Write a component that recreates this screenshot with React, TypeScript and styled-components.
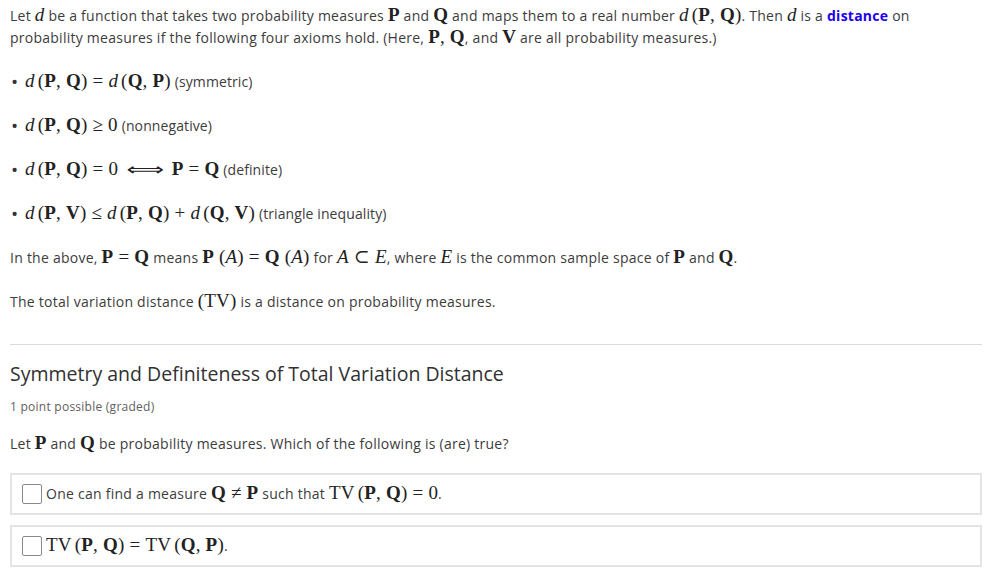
import React from 'react';
import styled, { createGlobalStyle } from 'styled-components';

const GlobalStyle = createGlobalStyle`
  html, body {
    margin: 0;
    padding: 0;
    background: #ffffff;
  }
  body {
    font-family: 'Open Sans', 'Liberation Sans', sans-serif;
    color: #3c3c3c;
    font-size: 14px;
    letter-spacing: 0.25px;
  }
`;

const Page = styled.div`
  width: 972px;
  padding: 5px 8px 0 10px;
`;

const Para = styled.p<{ $top?: number }>`
  margin: ${(p) => p.$top ?? 0}px 0 0;
  line-height: 22px;
`;

const Math = styled.span`
  font-family: 'Liberation Serif', 'DejaVu Serif', serif;
  font-size: 19px;
  line-height: 1;
  letter-spacing: 0.2px;
  color: #222;
  white-space: nowrap;
`;

const Bold = styled.b`
  font-weight: 700;
`;

const Var = styled.i`
  font-style: italic;
`;

const Op = styled.span<{ $gap?: number }>`
  margin: 0 ${(p) => p.$gap ?? 5}px;
`;

const Arrow = styled.span`
  display: inline-block;
  font-family: 'DejaVu Sans', sans-serif;
  font-size: 17px;
  transform: scaleX(1.55);
  margin: 0 14px 0 15px;
`;

const Link = styled.a`
  color: #2200ee;
  font-weight: 700;
  text-decoration: none;
`;

const Axioms = styled.ul`
  list-style: none;
  margin: 22px 0 0;
  padding: 0;
  display: flex;
  flex-direction: column;
  gap: 22px;
`;

const Axiom = styled.li`
  position: relative;
  padding-left: 15px;
  line-height: 22px;

  &::before {
    content: '•';
    position: absolute;
    left: 1px;
    top: 0;
    font-size: 19px;
    color: #333;
  }
`;

const Note = styled.span`
  font-size: 14px;
  letter-spacing: 0.1px;
`;

const Divider = styled.hr`
  margin: 31px 0 0;
  border: none;
  border-top: 1px solid #dcdcdc;
`;

const Heading = styled.h3`
  margin: 15px 0 0;
  font-size: 19.5px;
  font-weight: 400;
  line-height: 28px;
  letter-spacing: 0;
  color: #313131;
`;

const Points = styled.div`
  margin-top: 10px;
  font-size: 12px;
  line-height: 18px;
  color: #5e5e5e;
`;

const Options = styled.div`
  margin-top: 18px;
  display: flex;
  flex-direction: column;
  gap: 10px;
`;

const Option = styled.label`
  display: flex;
  align-items: center;
  gap: 4px;
  height: 38px;
  padding: 0 10px;
  border: 2px solid #e4e4e4;
  line-height: 22px;
  cursor: pointer;
`;

const Box = styled.span`
  width: 18px;
  height: 18px;
  border: 1px solid #8a8a8a;
  border-radius: 2px;
  background: #fff;
  flex: none;
`;

const d = <Var>d</Var>;
const P = <Bold>P</Bold>;
const Q = <Bold>Q</Bold>;
const V = <Bold>V</Bold>;

function Pair({ a, b }: { a: React.ReactNode; b: React.ReactNode }) {
  return (
    <>
      <span style={{ marginLeft: 3 }}>(</span>
      {a}, {b})
    </>
  );
}

export default function App() {
  return (
    <>
      <GlobalStyle />
      <Page>
        <Para>
          Let <Math>{d}</Math> be a function that takes two probability measures <Math>{P}</Math> and{' '}
          <Math>{Q}</Math> and maps them to a real number{' '}
          <Math>
            {d}
            <Pair a={P} b={Q} />
          </Math>
          . Then <Math>{d}</Math> is a <Link href="#">distance</Link> on probability measures if the
          following four axioms hold. (Here, <Math>{P}, {Q}</Math>, and <Math>{V}</Math> are all
          probability measures.)
        </Para>

        <Axioms>
          <Axiom>
            <Math>
              {d}
              <Pair a={P} b={Q} />
              <Op>=</Op>
              {d}
              <Pair a={Q} b={P} />
            </Math>{' '}
            <Note>(symmetric)</Note>
          </Axiom>
          <Axiom>
            <Math>
              {d}
              <Pair a={P} b={Q} />
              <Op>≥</Op>0
            </Math>{' '}
            <Note>(nonnegative)</Note>
          </Axiom>
          <Axiom>
            <Math>
              {d}
              <Pair a={P} b={Q} />
              <Op>=</Op>0<Arrow>⟺</Arrow>
              {P}
              <Op>=</Op>
              {Q}
            </Math>{' '}
            <Note>(definite)</Note>
          </Axiom>
          <Axiom>
            <Math>
              {d}
              <Pair a={P} b={V} />
              <Op>≤</Op>
              {d}
              <Pair a={P} b={Q} />
              <Op>+</Op>
              {d}
              <Pair a={Q} b={V} />
            </Math>{' '}
            <Note>(triangle inequality)</Note>
          </Axiom>
        </Axioms>

        <Para $top={22}>
          In the above,{' '}
          <Math>
            {P}
            <Op>=</Op>
            {Q}
          </Math>{' '}
          means{' '}
          <Math>
            {P} (<Var>A</Var>)<Op>=</Op>
            {Q} (<Var>A</Var>)
          </Math>{' '}
          for{' '}
          <Math>
            <Var>A</Var>
            <Op>⊂</Op>
            <Var>E</Var>
          </Math>
          , where <Math><Var>E</Var></Math> is the common sample space of <Math>{P}</Math> and{' '}
          <Math>{Q}</Math>.
        </Para>

        <Para $top={22}>
          The total variation distance <Math>(TV)</Math> is a distance on probability measures.
        </Para>

        <Divider />

        <Heading>Symmetry and Definiteness of Total Variation Distance</Heading>
        <Points>1 point possible (graded)</Points>

        <Para $top={17}>
          Let <Math>{P}</Math> and <Math>{Q}</Math> be probability measures. Which of the following is
          (are) true?
        </Para>

        <Options>
          <Option>
            <Box />
            <span>
              One can find a measure{' '}
              <Math>
                {Q}
                <Op>≠</Op>
                {P}
              </Math>{' '}
              such that{' '}
              <Math>
                TV
                <Pair a={P} b={Q} />
                <Op>=</Op>0
              </Math>
              .
            </span>
          </Option>
          <Option>
            <Box />
            <span>
              <Math>
                TV
                <Pair a={P} b={Q} />
                <Op>=</Op>
                TV
                <Pair a={Q} b={P} />
              </Math>
              .
            </span>
          </Option>
        </Options>
      </Page>
    </>
  );
}
